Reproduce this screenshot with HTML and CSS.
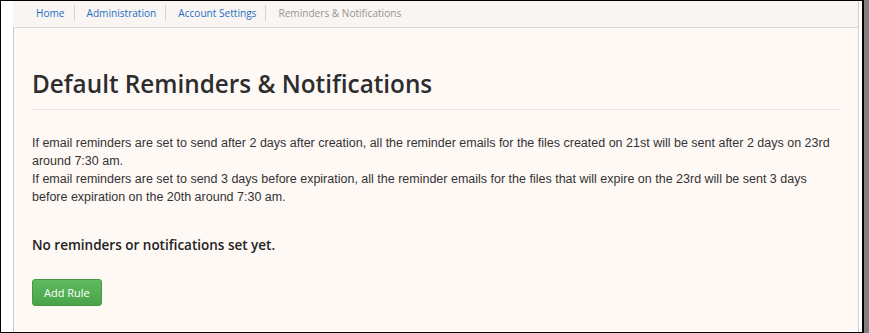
FILE: index.html
```html
<!DOCTYPE html>
<html lang="en">
<head>
    <meta charset="UTF-8">
    <title>Reminders &amp; Notifications</title>
    <link rel="stylesheet" href="styles.css">
</head>
<body>
    <div class="frame">
        <div class="page">
            <ul class="breadcrumb">
                <li><a href="#">Home</a></li>
                <li><a href="#">Administration</a></li>
                <li><a href="#">Account Settings</a></li>
                <li class="active">Reminders &amp; Notifications</li>
            </ul>
            <div class="panel">
                <h1 class="page-title">Default Reminders &amp; Notifications</h1>
                <p class="info">
                    If email reminders are set to send after 2 days after creation, all the reminder emails for the files created on 21st will be sent after 2 days on 23rd around 7:30 am.<br>
                    If email reminders are set to send 3 days before expiration, all the reminder emails for the files that will expire on the 23rd will be sent 3 days before expiration on the 20th around 7:30 am.
                </p>
                <p class="empty">No reminders or notifications set yet.</p>
                <button type="button" class="btn-success">Add Rule</button>
            </div>
        </div>
    </div>
</body>
</html>
```

FILE: styles.css
```css
body {
    margin: 0;
    width: 869px;
    height: 333px;
    overflow: hidden;
    background: #808080;
    font-family: 'Open Sans', sans-serif;
}

.frame {
    width: 864px;
    height: 333px;
    border: 1px solid #000;
    border-right-width: 2px;
    background: #fff;
    padding: 0 3px 0 12px;
    box-sizing: border-box;
    overflow: hidden;
}

.page {
    height: 100%;
    border-right: 1px solid #d4cfcc;
    display: flex;
    flex-direction: column;
}

.breadcrumb {
    list-style: none;
    margin: 0;
    padding: 0 0 3px 23px;
    height: 27px;
    box-sizing: border-box;
    display: flex;
    align-items: center;
    background: #f9f5f2;
    border-bottom: 1px solid #ddd6d2;
    font-size: 10.1px;
}

.breadcrumb li {
    padding: 0 9px 0 12px;
    border-left: 1px solid #d9d2cd;
    line-height: 16px;
}

.breadcrumb li:first-child {
    padding-left: 0;
    border-left: none;
}

.breadcrumb a {
    color: #1f6fc5;
    text-decoration: none;
}

.breadcrumb .active {
    color: #9a9491;
}

.panel {
    flex: 1;
    background: #fff9f6;
    border-left: 1px solid #cfcac7;
    padding: 0 18px;
    display: flex;
    flex-direction: column;
}

.page-title {
    margin: 39px 0 0;
    padding-bottom: 8px;
    font-size: 24.3px;
    font-weight: 600;
    color: #2d2d2d;
    border-bottom: 1px solid #e8e3e0;
    line-height: 34px;
}

.info {
    margin: 24px 0 0;
    font-family: 'Liberation Sans', Arial, sans-serif;
    font-size: 12.5px;
    line-height: 18px;
    color: #333;
}

.empty {
    margin: 30px 0 0;
    font-size: 13.5px;
    font-weight: 600;
    color: #222;
}

.btn-success {
    margin-top: 25px;
    align-self: flex-start;
    height: 27px;
    padding: 0 11px;
    font-family: 'Open Sans', sans-serif;
    font-size: 11px;
    color: #fff;
    background: linear-gradient(#5fbb5f, #4aa34a);
    border: 1px solid #45993f;
    border-radius: 3px;
    cursor: pointer;
}
```
